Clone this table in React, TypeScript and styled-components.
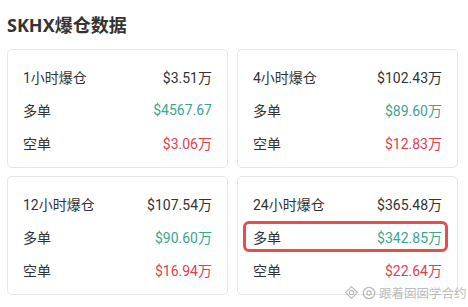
import React from 'react';
import styled, { createGlobalStyle } from 'styled-components';

const GlobalStyle = createGlobalStyle`
  html, body {
    margin: 0;
    padding: 0;
    background: #ffffff;
    overflow: hidden;
  }
  body {
    font-family: Roboto, "Noto Sans CJK SC", sans-serif;
  }
`;

const Page = styled.div`
  position: relative;
  width: 468px;
  height: 307px;
  padding: 12px 10px 0 7px;
  box-sizing: border-box;
  overflow: hidden;
`;

const Title = styled.h1`
  margin: 0;
  font-size: 18px;
  line-height: 26px;
  font-weight: 700;
  color: #333333;
  font-family: "Noto Sans", "Noto Sans CJK SC", sans-serif;
`;

const Grid = styled.div`
  display: grid;
  grid-template-columns: 221px 221px;
  column-gap: 9px;
  row-gap: 8px;
  margin-top: 11px;
`;

const Card = styled.div`
  border: 1px solid #e6e6e6;
  border-radius: 5px;
  padding: 10px 15px;
  height: 119px;
  box-sizing: border-box;
`;

const Row = styled.div<{ $marked?: boolean }>`
  position: relative;
  display: flex;
  justify-content: space-between;
  align-items: center;
  height: 33px;

  ${(p) =>
    p.$marked &&
    `
    &::after {
      content: '';
      position: absolute;
      left: -10px;
      right: -6px;
      top: 1px;
      bottom: 1px;
      border: 3px solid #ea4b4d;
      border-radius: 6px;
    }
  `}
`;

const Label = styled.span`
  font-size: 14px;
  color: #333333;
  font-family: Roboto, "Noto Sans CJK SC", sans-serif;
`;

const Value = styled.span<{ $tone?: 'up' | 'down' }>`
  font-size: 14px;
  font-family: Roboto, "Noto Sans CJK SC", sans-serif;
  color: ${(p) => (p.$tone === 'up' ? '#3ba58e' : p.$tone === 'down' ? '#e3404c' : '#333333')};
`;

const Watermark = styled.div`
  position: absolute;
  left: 344px;
  top: 283px;
  display: flex;
  align-items: center;
  gap: 3px;
  white-space: nowrap;
  font-size: 12.5px;
  color: rgba(150, 150, 150, 0.65);
  font-family: "Noto Sans CJK SC", sans-serif;
`;

type Stat = {
  period: string;
  total: string;
  long: string;
  short: string;
  marked?: boolean;
};

const stats: Stat[] = [
  { period: '1小时爆仓', total: '$3.51万', long: '$4567.67', short: '$3.06万' },
  { period: '4小时爆仓', total: '$102.43万', long: '$89.60万', short: '$12.83万' },
  { period: '12小时爆仓', total: '$107.54万', long: '$90.60万', short: '$16.94万' },
  { period: '24小时爆仓', total: '$365.48万', long: '$342.85万', short: '$22.64万', marked: true },
];

const App: React.FC = () => {
  return (
    <>
      <GlobalStyle />
      <Page>
        <Title>SKHX爆仓数据</Title>
        <Grid>
          {stats.map((s) => (
            <Card key={s.period}>
              <Row>
                <Label>{s.period}</Label>
                <Value>{s.total}</Value>
              </Row>
              <Row $marked={s.marked}>
                <Label>多单</Label>
                <Value $tone="up">{s.long}</Value>
              </Row>
              <Row>
                <Label>空单</Label>
                <Value $tone="down">{s.short}</Value>
              </Row>
            </Card>
          ))}
        </Grid>
        <Watermark>
          <svg width="15" height="15" viewBox="0 0 14 14" fill="none" stroke="currentColor" strokeWidth="1">
            <path d="M7 1.5 L12.5 7 L7 12.5 L1.5 7 Z" />
            <circle cx="7" cy="7" r="2" />
          </svg>
          <svg width="14" height="14" viewBox="0 0 13 13" fill="none" stroke="currentColor" strokeWidth="1.2">
            <circle cx="6.5" cy="6.5" r="5.3" />
            <circle cx="6.5" cy="6.5" r="2" />
          </svg>
          <span>跟着囡囡学合约</span>
        </Watermark>
      </Page>
    </>
  );
};

export default App;
